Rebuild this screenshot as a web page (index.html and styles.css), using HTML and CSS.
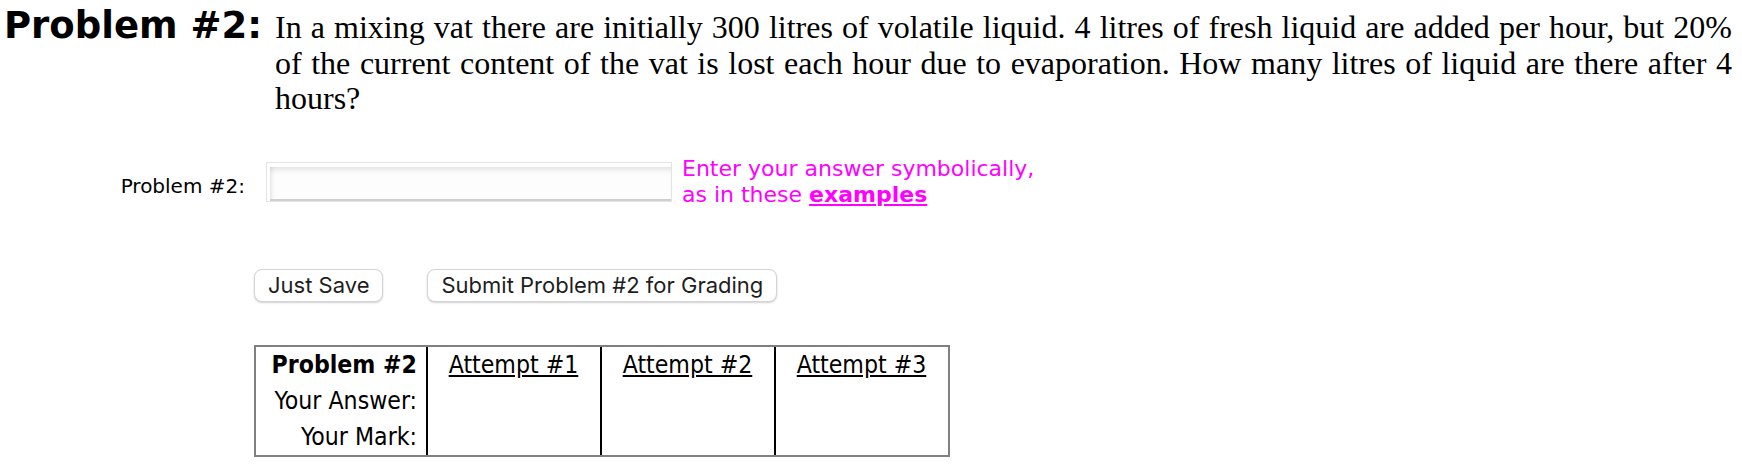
FILE: index.html
```html
<!DOCTYPE html>
<html lang="en">
<head>
<meta charset="utf-8">
<title>Problem #2</title>
<link rel="stylesheet" href="styles.css">
</head>
<body>
<div class="page">
  <div class="problem">
    <div class="problem-title">Problem #2:</div>
    <div class="problem-text">In a mixing vat there are initially 300 litres of volatile liquid. 4 litres of fresh liquid are added per hour, but 20% of the current content of the vat is lost each hour due to evaporation. How many litres of liquid are there after 4 hours?</div>
  </div>

  <div class="answer-row">
    <label class="answer-label" for="ans">Problem #2:</label>
    <span class="field"><input id="ans" class="field-input" type="text"></span>
    <div class="hint">Enter your answer symbolically,<br>as in these <a class="hint-link" href="#">examples</a></div>
  </div>

  <div class="buttons">
    <button class="btn" type="button">Just Save</button>
    <button class="btn" type="button">Submit Problem #2 for Grading</button>
  </div>

  <table class="attempts">
    <tr>
      <th class="row-head">Problem #2</th>
      <td class="cell"><a class="attempt-link" href="#">Attempt #1</a></td>
      <td class="cell"><a class="attempt-link" href="#">Attempt #2</a></td>
      <td class="cell"><a class="attempt-link" href="#">Attempt #3</a></td>
    </tr>
    <tr>
      <td class="row-label">Your Answer:</td>
      <td class="cell"></td>
      <td class="cell"></td>
      <td class="cell"></td>
    </tr>
    <tr>
      <td class="row-label">Your Mark:</td>
      <td class="cell"></td>
      <td class="cell"></td>
      <td class="cell"></td>
    </tr>
  </table>
</div>
</body>
</html>
```

FILE: styles.css
```css
html, body {
  margin: 0;
  padding: 0;
  background: #ffffff;
  color: #000000;
}

.page {
  padding-top: 8px;
}

.problem {
  display: flex;
  align-items: baseline;
  padding-left: 4px;
  padding-right: 10px;
}

.problem-title {
  flex: 0 0 271px;
  font-family: "DejaVu Sans", Verdana, sans-serif;
  font-weight: bold;
  font-size: 37px;
  line-height: 35.5px;
  white-space: nowrap;
}

.problem-text {
  flex: 1 1 auto;
  font-family: "Liberation Serif", "Times New Roman", serif;
  font-size: 32px;
  line-height: 35.5px;
  text-align: justify;
}

.answer-row {
  display: flex;
  align-items: center;
  margin-top: 39px;
}

.answer-label {
  flex: 0 0 245px;
  text-align: right;
  margin-right: 21px;
  margin-top: 8px;
  font-family: "DejaVu Sans", Verdana, sans-serif;
  font-size: 20px;
}

.field {
  display: flex;
  box-sizing: border-box;
  width: 406px;
  height: 40px;
  border: 1px solid #e4e4e4;
  padding: 4px 0 0 3px;
  background: #ffffff;
}

.field-input {
  flex: 1 1 auto;
  min-width: 0;
  margin: 0;
  border: 0;
  border-bottom: 2px solid #cfcfcf;
  padding: 0;
  background: #fdfdfd;
  box-shadow: inset 0 6px 6px -4px rgba(0, 0, 0, 0.13), inset 6px 0 5px -5px rgba(0, 0, 0, 0.12);
  outline: none;
}

.hint {
  margin-left: 10px;
  font-family: "DejaVu Sans", Verdana, sans-serif;
  font-size: 22px;
  line-height: 26px;
  color: #ff00ff;
}

.hint-link {
  color: #ff00ff;
  font-weight: bold;
  text-decoration: underline;
}

.buttons {
  display: flex;
  gap: 44px;
  margin-top: 61px;
  padding-left: 254px;
}

.btn {
  box-sizing: border-box;
  height: 33px;
  padding: 0 13px;
  margin: 0;
  border: 1px solid #d4d4d4;
  border-radius: 8px;
  background: #ffffff;
  box-shadow: 0 1px 2px rgba(0, 0, 0, 0.18);
  font-family: Inter, "Liberation Sans", sans-serif;
  font-size: 22px;
  color: #1e1e1e;
}

.attempts {
  margin-top: 43px;
  margin-left: 254px;
  border: 2px solid #808080;
  border-collapse: separate;
  border-spacing: 0;
  font-family: "DejaVu Sans Condensed", "DejaVu Sans", sans-serif;
  font-stretch: condensed;
  font-size: 24.6px;
}

.attempts th,
.attempts td {
  height: 36px;
  padding: 0 9px 0 8px;
  vertical-align: middle;
}

.row-head {
  width: 153px;
  text-align: right;
  font-weight: bold;
}

.row-label {
  text-align: right;
}

.cell {
  width: 155px;
  text-align: center;
  border-left: 2px solid #000000;
}

.attempt-link {
  color: #000000;
  text-decoration: underline;
}
```
